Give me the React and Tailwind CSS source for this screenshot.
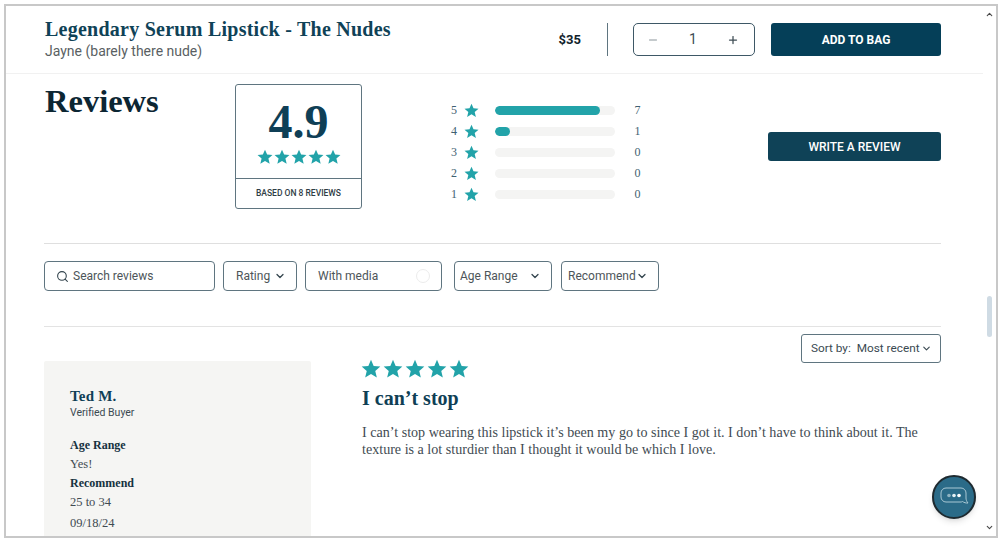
import React from 'react';
import { Search, ChevronDown, ChevronUp, Minus, Plus } from 'lucide-react';

const serif = 'font-["Liberation_Serif",serif]';
const sans = 'font-["Roboto",sans-serif]';

const bars = [
    { label: 5, pct: 88, count: 7 },
    { label: 4, pct: 13, count: 1 },
    { label: 3, pct: 0, count: 0 },
    { label: 2, pct: 0, count: 0 },
    { label: 1, pct: 0, count: 0 },
];

const Star = ({ size }) => (
    <svg width={size} height={size} viewBox="0 0 24 24" className="shrink-0 fill-[#22a3a9]">
        <path d="M12 1l3.2 7.4 8 .7-6.1 5.3 1.9 7.9L12 18.1 5 22.3l1.9-7.9L.8 9.1l8-.7z" />
    </svg>
);

const Stars = ({ size, className }) => (
    <div className={`flex ${className}`}>
        {[1, 2, 3, 4, 5].map((n) => <Star key={n} size={size} />)}
    </div>
);

const Chip = ({ className, children }) => (
    <div className={`h-[30px] flex items-center border border-[#5f7580] rounded-[4px] text-[12px] text-[#4d5559] whitespace-nowrap ${className}`}>
        {children}
    </div>
);

const Chevron = () => <ChevronDown size={12} strokeWidth={2.5} className="shrink-0 text-[#33444d]" />;

const App = () => {
    return (
        <div className={`w-[1000px] h-[540px] overflow-hidden bg-white pt-[4px] pl-[4px] pr-[2px] pb-[2px] ${sans}`}>
            <div className="h-[534px] border-2 border-[#c8c8c8] flex">
                <div className="flex-1 relative overflow-hidden">
                    {/* Sticky product bar */}
                    <div className="h-[68px] border-b border-[#f1f1f1] flex items-center pl-[39px] pr-[42px]">
                        <div className="flex-1 pb-[3px]">
                            <div className={`${serif} font-bold text-[20px] leading-[26px] text-[#0f4257] tracking-[0.25px]`}>
                                Legendary Serum Lipstick - The Nudes
                            </div>
                            <div className="text-[14px] leading-[18px] text-[#5a5f63]">Jayne (barely there nude)</div>
                        </div>
                        <div className="text-[13px] font-bold text-[#11222b] mr-[26px]">$35</div>
                        <div className="w-px h-[33px] bg-[#5f7580] mr-[25px]"></div>
                        <div className="w-[122px] h-[33px] border border-[#3e5866] rounded-[5px] flex items-center justify-between pl-[13px] pr-[15px] mr-[16px] text-[#3e4c54]">
                            <Minus size={12} className="text-[#8a959a]" />
                            <span className="text-[14px]">1</span>
                            <Plus size={12} strokeWidth={2.5} />
                        </div>
                        <div className="w-[170px] h-[33px] rounded-[3px] bg-[#053f58] text-white text-[12px] font-bold flex items-center justify-center">
                            ADD TO BAG
                        </div>
                    </div>

                    <div className="pl-[38px] pr-[42px]">
                        {/* Reviews summary */}
                        <div className="h-[170px] flex border-b border-[#dfdfdf]">
                            <div className={`${serif} font-bold text-[32.5px] leading-[38px] text-[#0c2633] w-[191px] pl-px pt-[8px]`}>Reviews</div>
                            <div className="w-[127px] h-[125px] mt-[10px] border border-[#5f7580] rounded-[3px] flex flex-col">
                                <div className="flex-1 flex flex-col items-center">
                                    <div className={`${serif} font-bold text-[48px] leading-[48px] text-[#0f3f56] mt-[13px]`}>4.9</div>
                                    <Stars size={16} className="mt-[3px] gap-px" />
                                </div>
                                <div className="h-[30px] border-t border-[#5f7580] flex items-center justify-center text-[8.5px] font-medium text-[#2f3d45]">
                                    BASED ON 8 REVIEWS
                                </div>
                            </div>
                            <div className="ml-[89px] w-[200px] pt-[28px] flex flex-col gap-[5px]">
                                {bars.map((b) => (
                                    <div key={b.label} className={`h-[16px] flex items-center ${serif} text-[12px] text-[#3f6172]`}>
                                        <span className="w-[12.5px]">{b.label}</span>
                                        <Star size={15} />
                                        <div className="ml-[16px] w-[120px] h-[9px] rounded-full bg-[#f4f4f3] overflow-hidden">
                                            <div className="h-full rounded-full bg-[#22a3a9]" style={{ width: `${b.pct}%` }}></div>
                                        </div>
                                        <span className="ml-[20px]">{b.count}</span>
                                    </div>
                                ))}
                            </div>
                            <div className="ml-auto mt-[58px] w-[173px] h-[29px] rounded-[3px] bg-[#0f4257] text-white text-[12px] font-medium flex items-center justify-center">
                                WRITE A REVIEW
                            </div>
                        </div>

                        {/* Filters */}
                        <div className="h-[83px] border-b border-[#e3e3e3] flex items-start pt-[17px]">
                            <Chip className="w-[171px] pl-[11px] gap-[4px]">
                                <Search size={13} className="shrink-0 text-[#33444d]" />
                                Search reviews
                            </Chip>
                            <Chip className="w-[74px] ml-[8px] pl-[12px] justify-between pr-[10px]">
                                Rating
                                <Chevron />
                            </Chip>
                            <Chip className="w-[137px] ml-[8px] pl-[12px] justify-between pr-[11px]">
                                With media
                                <span className="w-[14px] h-[14px] rounded-full border border-[#ececec]"></span>
                            </Chip>
                            <Chip className="w-[98px] ml-[12px] pl-[5px] justify-between pr-[10px]">
                                Age Range
                                <Chevron />
                            </Chip>
                            <Chip className="w-[98px] ml-[9px] pl-[6px] justify-between pr-[12px]">
                                Recommend
                                <Chevron />
                            </Chip>
                        </div>

                        {/* Review */}
                        <div className="flex justify-end pt-[7px]">
                            <div className="h-[29px] w-[140px] flex items-center border border-[#5f7580] rounded-[3px] text-[11.8px] text-[#3b4a52] pl-[9px] pr-[8px] justify-between whitespace-nowrap">
                                <span>Sort by:&nbsp; Most recent</span>
                                <ChevronDown size={11} strokeWidth={2.5} className="shrink-0" />
                            </div>
                        </div>
                        <div className="flex items-start -mt-[2px]">
                            <div className="w-[267px] h-[200px] bg-[#f5f5f3] rounded-[2px] pl-[26px] pt-[26px] shrink-0">
                                <div className={`${serif} font-bold text-[15px] leading-[18px] text-[#0f3f56] tracking-[0.2px]`}>Ted M.</div>
                                <div className="text-[10.5px] leading-[16px] text-[#3b4a52]">Verified Buyer</div>
                                <div className={`${serif} text-[12.5px] text-[#3f4b52]`}>
                                    <div className="font-bold text-[12px] leading-[19px] mt-[15px] text-[#15323f]">Age Range</div>
                                    <div className="leading-[19px]">Yes!</div>
                                    <div className="font-bold text-[12px] leading-[19px] text-[#15323f]">Recommend</div>
                                    <div className="leading-[19px]">25 to 34</div>
                                    <div className="leading-[19px] mt-[2px]">09/18/24</div>
                                </div>
                            </div>
                            <div className="ml-[51px] flex-1">
                                <Stars size={20} className="gap-[2px] -ml-px -mt-[2px]" />
                                <div className={`${serif} font-bold text-[20px] leading-[26px] text-[#0f3f56] mt-[6px]`}>I can’t stop</div>
                                <p className={`${serif} text-[14.1px] leading-[17px] text-[#3f4b52] mt-[13px] w-[570px]`}>
                                    I can’t stop wearing this lipstick it’s been my go to since I got it. I don’t have to think about it. The texture is a lot sturdier than I thought it would be which I love.
                                </p>
                            </div>
                        </div>
                    </div>

                    {/* Chat bubble */}
                    <div className="absolute left-[926px] top-[469px] w-[44px] h-[44px] rounded-full bg-[#2b6b88] border-2 border-[#1e2a30] shadow-md flex items-center justify-center">
                        <svg width="30" height="22" viewBox="0 0 30 22" fill="none">
                            <path d="M7 2h15a5 5 0 0 1 5 5v5c0 1.500.6 3.500 2 5-2 .2-4-.4-5.500-1.500-.5.3-1 .5-1.500.5H7a5 5 0 0 1-5-5V7a5 5 0 0 1 5-5z" stroke="#a9c8d4" strokeWidth="1" />
                            <circle cx="10" cy="9.500" r="1.800" fill="#8fb3c2" />
                            <circle cx="15" cy="9.500" r="1.800" fill="#e6f0f4" />
                            <circle cx="20" cy="9.500" r="1.800" fill="#ffffff" />
                        </svg>
                    </div>
                </div>

                {/* Scrollbar */}
                <div className="w-[13px] flex flex-col items-center justify-between text-[#4a4a4a] relative">
                    <ChevronUp size={9} strokeWidth={3} className="mt-[4px]" />
                    <div className="absolute top-[290px] w-[5px] h-[41px] rounded-full bg-[#cfdbe4]"></div>
                    <ChevronDown size={9} strokeWidth={3} className="mb-[4px]" />
                </div>
            </div>
        </div>
    );
};

export default App;
